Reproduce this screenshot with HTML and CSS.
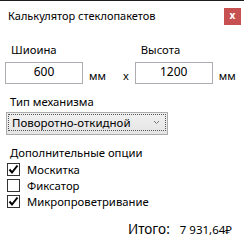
FILE: index.html
```html
<!DOCTYPE html>
<html lang="ru">
<head>
    <meta charset="UTF-8">
    <title>Калькулятор стеклопакетов</title>
    <link rel="stylesheet" href="styles.css">
</head>
<body>
    <div class="window">
        <div class="titlebar">
            <span class="title">Калькулятор стеклопакетов</span>
            <span class="close">x</span>
        </div>
        <div class="content">
            <div class="size-row">
                <div class="field">
                    <label class="field-label">Шиоина</label>
                    <div class="field-line">
                        <div class="text-input">600</div>
                        <span class="unit">мм</span>
                    </div>
                </div>
                <span class="times">x</span>
                <div class="field">
                    <label class="field-label">Высота</label>
                    <div class="field-line">
                        <div class="text-input">1200</div>
                        <span class="unit">мм</span>
                    </div>
                </div>
            </div>

            <div class="section-label">Тип механизма</div>
            <div class="combo">
                <div class="combo-focus">
                    <span>Поворотно-откидной</span>
                    <svg class="chevron" width="7" height="5" viewBox="0 0 7 5">
                        <polyline points="1,1 3.5,3.5 6,1" fill="none" stroke="#777" stroke-width="1"/>
                    </svg>
                </div>
            </div>

            <div class="section-label">Дополнительные опции</div>
            <div class="options">
                <div class="option">
                    <span class="box"><svg width="11" height="11" viewBox="0 0 11 11"><polyline points="1.5,5.5 4,8.5 9.5,1.5" fill="none" stroke="#000" stroke-width="2"/></svg></span>
                    <span>Москитка</span>
                </div>
                <div class="option">
                    <span class="box"></span>
                    <span>Фиксатор</span>
                </div>
                <div class="option">
                    <span class="box"><svg width="11" height="11" viewBox="0 0 11 11"><polyline points="1.5,5.5 4,8.5 9.5,1.5" fill="none" stroke="#000" stroke-width="2"/></svg></span>
                    <span>Микропроветривание</span>
                </div>
            </div>

            <div class="total">
                <span class="total-label">Итого:</span>
                <span class="total-value">7 931,64₽</span>
            </div>
        </div>
    </div>
</body>
</html>
```

FILE: styles.css
```css
body {
    margin: 0;
    background: #fff;
    font-family: 'Noto Sans', 'Open Sans', sans-serif;
    font-size: 11.3px;
    color: #000;
}
.window {
    height: 241px;
    border-top: 1px solid #1e1e1e;
    background: #fff;
}
.titlebar {
    display: flex;
    justify-content: space-between;
    align-items: flex-start;
    padding: 7px 3px 0 8px;
    height: 34px;
    box-sizing: border-box;
}
.title {
    font-size: 11px;
    line-height: 16px;
}
.close {
    width: 17px;
    height: 17px;
    background: #c75050;
    color: #fff;
    font-size: 10px;
    font-weight: bold;
    line-height: 15px;
    text-align: center;
}
.content {
    padding: 0 5px;
}
.size-row {
    display: flex;
    align-items: flex-end;
}
.field {
    display: flex;
    flex-direction: column;
}
.field-label {
    padding-left: 6px;
    line-height: 16px;
    margin-top: 7px;
    margin-bottom: 4px;
}
.field-line {
    display: flex;
    align-items: flex-end;
}
.text-input {
    width: 76px;
    height: 20px;
    border: 1px solid #abadb3;
    text-align: center;
    line-height: 18px;
    font-size: 12px;
}
.unit {
    font-size: 11px;
    margin-left: 6px;
    line-height: 16px;
}
.times {
    font-size: 11px;
    line-height: 16px;
    margin: 0 6px 0 17px;
}
.section-label {
    padding-left: 5px;
    line-height: 16px;
    margin-top: 10px;
    margin-bottom: 2px;
}
.combo {
    width: 158px;
    height: 19px;
    margin-left: 1px;
    border: 1px solid #acacac;
    background: linear-gradient(#f0f0f0, #e5e5e5);
    padding: 1px;
}
.combo-focus {
    height: 17px;
    border: 1px dotted #555;
    box-sizing: border-box;
    display: flex;
    align-items: center;
    justify-content: space-between;
    padding: 0 5px 0 3px;
    font-size: 11.5px;
}
.options {
    display: flex;
    flex-direction: column;
    gap: 3px;
    padding-left: 2px;
}
.option {
    display: flex;
    align-items: center;
    gap: 7px;
    height: 13px;
}
.box {
    width: 11px;
    height: 11px;
    border: 1px solid #333;
    display: flex;
    align-items: center;
    justify-content: center;
}
.total {
    display: flex;
    justify-content: flex-end;
    align-items: baseline;
    gap: 10px;
    padding-right: 7px;
    margin-top: 12px;
}
.total-label {
    font-size: 13.5px;
}
.total-value {
    font-size: 11.5px;
}
```
